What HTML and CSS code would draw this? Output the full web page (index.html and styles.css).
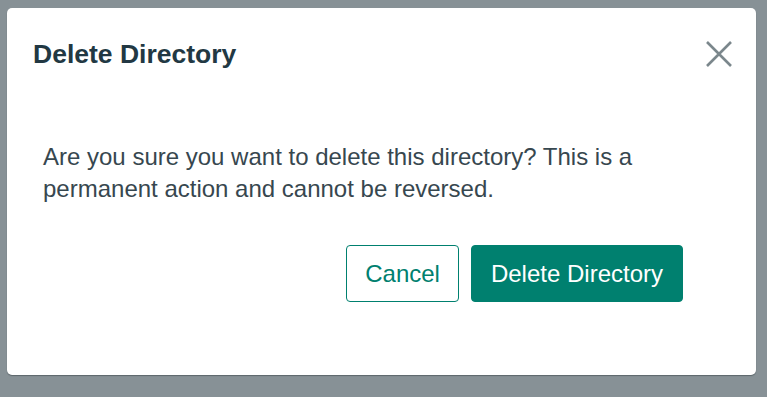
FILE: index.html
```html
<!DOCTYPE html>
<html lang="en">
<head>
	<meta charset="UTF-8">
	<meta name="viewport" content="width=device-width, initial-scale=1.0">
	<title>Delete Directory</title>
	<link rel="stylesheet" href="styles.css">
</head>
<body>
	<div class="overlay">
		<div class="dialog" role="dialog">
			<div class="dialog-head">
				<h2 class="dialog-title">Delete Directory</h2>
				<span class="close" title="Close">
					<svg width="28" height="28" viewBox="0 0 28 28">
						<path d="M2 2 L26 26 M26 2 L2 26" stroke="#7b878c" stroke-width="2.6" fill="none"/>
					</svg>
				</span>
			</div>
			<div class="dialog-body">
				<p>Are you sure you want to delete this directory? This is a permanent action and cannot be reversed.</p>
			</div>
			<div class="dialog-foot">
				<button class="btn btn-outline">Cancel</button>
				<button class="btn btn-primary">Delete Directory</button>
			</div>
		</div>
	</div>
</body>
</html>
```

FILE: styles.css
```css
html, body {
	margin: 0;
	height: 100%;
}

body {
	background-color: #879196;
	font-family: "Liberation Sans", Arial, sans-serif;
}

.overlay {
	padding: 8px 11px 0 7px;
}

.dialog {
	background-color: #fff;
	border-radius: 5px;
	height: 367px;
	box-sizing: border-box;
	box-shadow: 0 1px 1px rgba(40, 50, 55, .45);
}

.dialog-head {
	display: flex;
	justify-content: space-between;
	align-items: flex-start;
	padding: 31px 23px 0 26px;
}

.dialog-title {
	margin: 0;
	font-size: 26.5px;
	font-weight: bold;
	color: #223843;
	line-height: 30px;
}

.close {
	display: block;
	width: 28px;
	height: 28px;
	margin-top: 1px;
	cursor: pointer;
}

.dialog-body {
	padding: 72px 60px 0 36px;
}

.dialog-body p {
	margin: 0;
	font-size: 24px;
	line-height: 32px;
	color: #37474f;
}

.dialog-foot {
	display: flex;
	justify-content: flex-end;
	gap: 12px;
	padding: 40px 73px 0 0;
}

.btn {
	height: 57px;
	padding: 0 19px;
	font-family: "Liberation Sans", Arial, sans-serif;
	font-size: 24px;
	border-radius: 4px;
	cursor: pointer;
}

.btn-outline {
	padding: 0 18px;
	background-color: #fff;
	color: #00806f;
	border: 1px solid #00806f;
}

.btn-primary {
	background-color: #00806f;
	color: #fff;
	border: 1px solid #00806f;
}
```
